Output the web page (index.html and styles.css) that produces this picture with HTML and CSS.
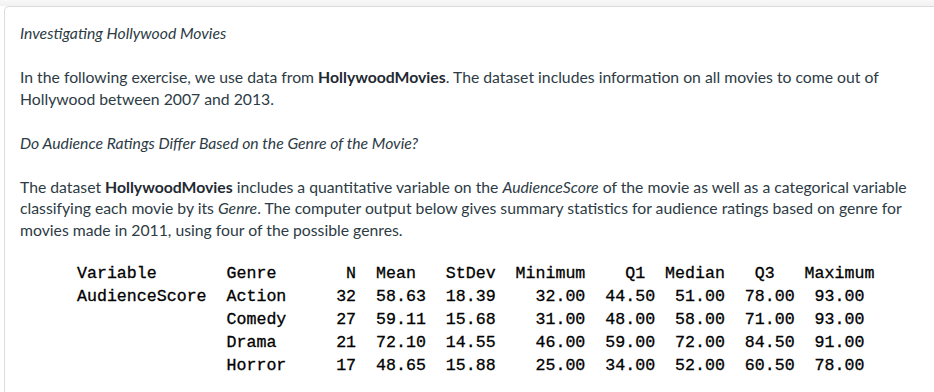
FILE: index.html
```html
<!DOCTYPE html>
<html>
<head>
<meta charset="utf-8">
<link rel="stylesheet" href="styles.css">
</head>
<body>
<div class="topbar"></div>
<div class="card">
  <p class="title"><em>Investigating Hollywood Movies</em></p>
  <p class="para">In the following exercise, we use data from <strong>HollywoodMovies</strong>. The dataset includes information on all movies to come out of Hollywood between 2007 and 2013.</p>
  <p class="title"><em>Do Audience Ratings Differ Based on the Genre of the Movie?</em></p>
  <p class="para">The dataset <strong>HollywoodMovies</strong> includes a quantitative variable on the <em>AudienceScore</em> of the movie as well as a categorical variable classifying each movie by its <em>Genre</em>. The computer output below gives summary statistics for audience ratings based on genre for movies made in 2011, using four of the possible genres.</p>
<pre class="output">Variable       Genre       N  Mean   StDev  Minimum    Q1  Median   Q3   Maximum
AudienceScore  Action     32  58.63  18.39    32.00  44.50  51.00  78.00  93.00
               Comedy     27  59.11  15.68    31.00  48.00  58.00  71.00  93.00
               Drama      21  72.10  14.55    46.00  59.00  72.00  84.50  91.00
               Horror     17  48.65  15.88    25.00  34.00  52.00  60.50  78.00</pre>
</div>
</body>
</html>
```
FILE: styles.css
```css
html, body {
  margin: 0;
  padding: 0;
  background: #ffffff;
}
body {
  font-family: Lato, "Noto Sans", sans-serif;
  color: #2d3b45;
  font-size: 15.75px;
  line-height: 21.7px;
}
.topbar {
  height: 6px;
  background: linear-gradient(#f8f8f8, #f1f1f1);
}
.card {
  margin-left: 4px;
  border-top: 1px solid #dcdcdc;
  border-left: 1px solid #dcdcdc;
  border-top-left-radius: 5px;
  padding: 15px 15px 0 15px;
  height: 400px;
  box-sizing: border-box;
}
.title {
  margin: 0 0 22.3px 0;
}
.para {
  margin: 0 0 22.3px 0;
}
.para strong {
  font-weight: 700;
  color: #1f2a33;
}
.output {
  margin: 0 0 0 57px;
  font-family: "Liberation Mono", monospace;
  font-size: 16.62px;
  line-height: 22.95px;
  color: #000;
  -webkit-text-stroke: 0.3px #000;
}
```
